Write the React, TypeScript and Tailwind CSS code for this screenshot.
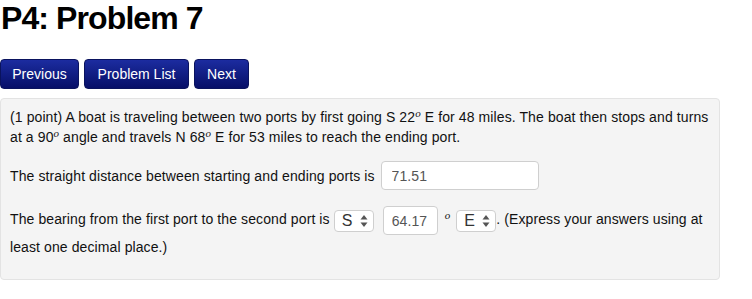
import { useState } from "react";

function Sup() {
  return <sup className="italic text-[11px] font-['Liberation_Serif',serif]">o</sup>;
}

function NavButton({ label, width }: { label: string; width: string }) {
  return (
    <button
      className={`${width} h-[30px] rounded-[4px] border border-[#0a135e] bg-gradient-to-b from-[#1c2ca0] to-[#070f68] text-white text-[14px] text-center`}
    >
      {label}
    </button>
  );
}

function Select({ value }: { value: string }) {
  return (
    <span className="inline-flex items-center justify-between w-[40px] h-[22px] pl-[7px] pr-[5px] bg-white border border-[#cfcfcf] rounded-[4px] text-[16px] leading-none text-[#333] align-middle">
      {value}
      <svg width="8" height="14" viewBox="0 0 8 14">
        <path d="M4 1 L7.5 5.5 H0.5 Z" fill="#555" />
        <path d="M4 13 L7.5 8.5 H0.5 Z" fill="#555" />
      </svg>
    </span>
  );
}

export default function App() {
  const [dist, setDist] = useState("71.51");
  const [angle, setAngle] = useState("64.17");

  return (
    <div className="w-[752px] h-[299px] bg-white font-['Liberation_Sans',Arial,sans-serif] text-[#111]">
      <h1 className="text-[32px] font-bold leading-[36px] pl-[1px] tracking-[-0.9px] text-black">P4: Problem 7</h1>

      <div className="flex gap-[5px] mt-[23px]">
        <NavButton label="Previous" width="w-[79px]" />
        <NavButton label="Problem List" width="w-[105px]" />
        <NavButton label="Next" width="w-[55px]" />
      </div>

      <div className="mt-[9px] w-[720px] bg-[#f4f4f4] border border-[#e3e3e3] rounded-[4px] pl-[9px] pr-[6px] pt-[8px] pb-[22px] text-[14px] leading-[20px] tracking-[0.1px]">
        <p>
          (1 point) A boat is traveling between two ports by first going S 22<Sup /> E for 48 miles. The boat then
          stops and turns at a 90<Sup /> angle and travels N 68<Sup /> E for 53 miles to reach the ending port.
        </p>

        <div className="mt-[14px] flex items-center">
          <span>The straight distance between starting and ending ports is</span>
          <input
            value={dist}
            onChange={(e) => setDist(e.target.value)}
            className="ml-[6px] w-[158px] h-[29px] px-[10px] bg-white border border-[#cfcfcf] rounded-[4px] text-[14px] text-[#555] outline-none"
          />
        </div>

        <p className="mt-[14px]">
          The bearing from the first port to the second port is
          <span className="ml-[4px]">
            <Select value="S" />
          </span>
          <input
            value={angle}
            onChange={(e) => setAngle(e.target.value)}
            className="ml-[9px] my-[2px] w-[55px] h-[29px] px-[8px] bg-white border border-[#cfcfcf] rounded-[4px] text-[14px] text-[#555] outline-none align-middle"
          />
          <span className="ml-[7px]">
            <Sup />
          </span>
          <span className="ml-[6px]">
            <Select value="E" />
          </span>
          . (Express your answers using at least one decimal place.)
        </p>
      </div>
    </div>
  );
}
